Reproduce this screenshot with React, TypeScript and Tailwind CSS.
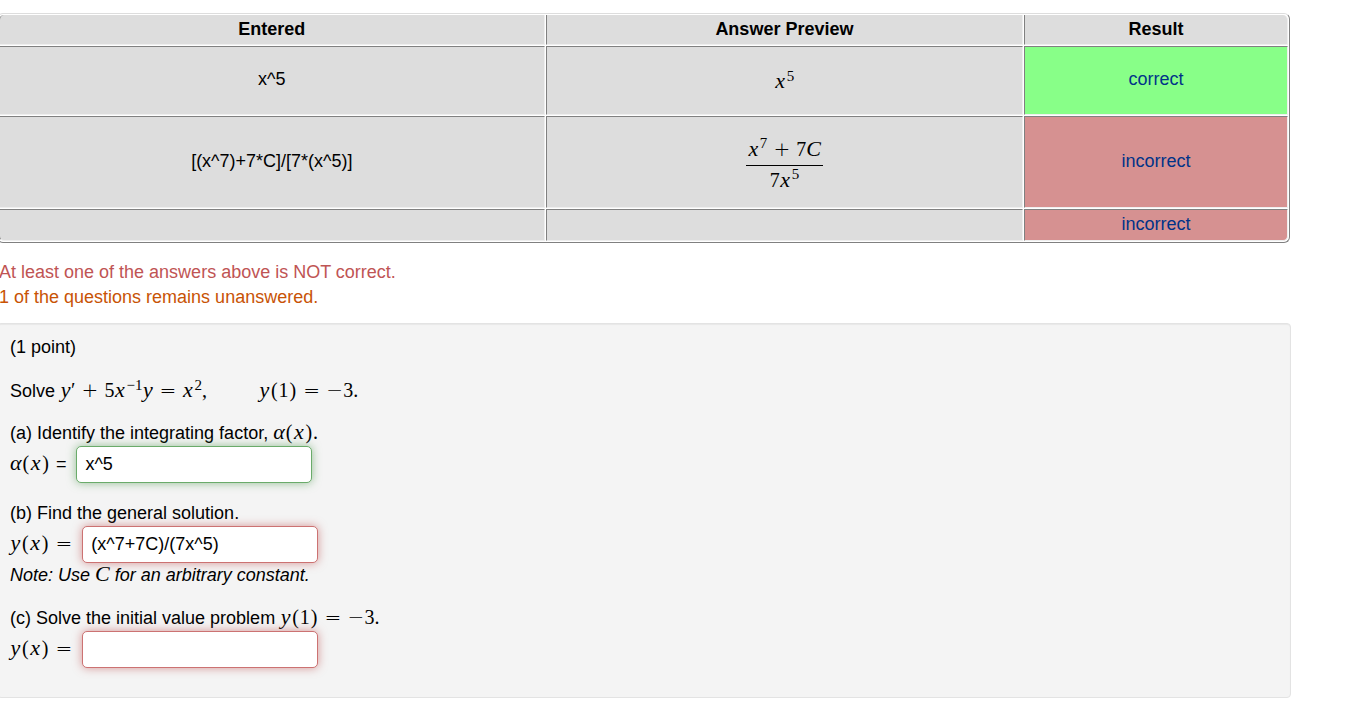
import type { ReactNode } from "react";
import clsx from "clsx";

const Math = ({ children }: { children: ReactNode }) => (
  <span className="font-['Liberation_Serif',serif] text-xl leading-none not-italic whitespace-nowrap">
    {children}
  </span>
);

const Var = ({ children }: { children: ReactNode }) => (
  <i className="inline-block min-w-[11px] text-center text-[22px] leading-none">
    {children}
  </i>
);

const Sup = ({ children }: { children: ReactNode }) => (
  <sup className="text-[15px] ml-px">{children}</sup>
);

const Sign = ({ children }: { children: ReactNode }) => (
  <span className="inline-block w-[17px] text-center font-['DejaVu_Sans',sans-serif] font-extralight text-xl leading-none">
    {children}
  </span>
);

const Op = ({ children }: { children: ReactNode }) => (
  <span className="mx-1.5">
    <Sign>{children}</Sign>
  </span>
);

const Call = ({ fn, arg }: { fn: string; arg: ReactNode }) => (
  <>
    <Var>{fn}</Var>
    <span className="mx-px">(</span>
    {arg}
    <span className="mx-px">)</span>
  </>
);

const InitialValue = () => (
  <Math>
    <Call fn="y" arg="1" />
    <Op>=</Op>
    <Sign>−</Sign>
    3.
  </Math>
);

const results = [
  {
    entered: "x^5",
    preview: (
      <Math>
        <Var>x</Var>
        <Sup>5</Sup>
      </Math>
    ),
    correct: true,
    height: "h-[69px]",
  },
  {
    entered: "[(x^7)+7*C]/[7*(x^5)]",
    preview: (
      <Math>
        <span className="inline-flex flex-col align-middle">
          <span className="border-b border-black px-0.5 pb-1 leading-6">
            <Var>x</Var>
            <Sup>7</Sup>
            <Op>+</Op>7<Var>C</Var>
          </span>
          <span className="pt-0.5 leading-6">
            7<Var>x</Var>
            <Sup>5</Sup>
          </span>
        </span>
      </Math>
    ),
    correct: false,
    height: "h-[92px]",
  },
  { entered: "", preview: null, correct: false, height: "h-8" },
];

const cell =
  "border border-t-[#808080] border-l-[#808080] border-r-[#eee] border-b-[#eee] px-0";

const ResultsTable = () => (
  <table className="w-full table-fixed border-separate border-spacing-px rounded-md border border-t-[#ddd] border-l-[#808080] border-r-[#808080] border-b-[#808080] text-center">
    <thead>
      <tr className="h-[30px]">
        <th className={clsx(cell, "w-[42.4%] rounded-tl-[5px] border-t-0 bg-[#ddd]")}>
          Entered
        </th>
        <th className={clsx(cell, "w-[37.1%] border-t-0 bg-[#ddd]")}>
          Answer Preview
        </th>
        <th className={clsx(cell, "rounded-tr-[5px] border-t-0 bg-[#ddd]")}>
          Result
        </th>
      </tr>
    </thead>
    <tbody>
      {results.map((row, idx) => (
        <tr key={idx} className={row.height}>
          <td
            className={clsx(
              cell,
              "bg-[#ddd] pb-0.5",
              idx === results.length - 1 && "rounded-bl-[5px]",
            )}
          >
            {row.entered}
          </td>
          <td className={clsx(cell, "bg-[#ddd] pt-1")}>{row.preview}</td>
          <td
            className={clsx(
              cell,
              "pb-0.5",
              row.correct ? "bg-[#88ff88]" : "bg-[#d69191]",
              idx === results.length - 1 && "rounded-br-[5px]",
            )}
          >
            <a href="#answers" className="text-[#003388]">
              {row.correct ? "correct" : "incorrect"}
            </a>
          </td>
        </tr>
      ))}
    </tbody>
  </table>
);

type AnswerProps = {
  id: string;
  label: ReactNode;
  value: string;
  correct?: boolean;
};

const Answer = ({ id, label, value, correct }: AnswerProps) => (
  <div className="flex items-center gap-1">
    <label htmlFor={id}>{label}</label>
    <input
      id={id}
      type="text"
      defaultValue={value}
      className={clsx(
        "h-[37px] w-[236px] rounded-[5px] border bg-white px-2",
        correct
          ? "border-[#6aab6a] shadow-[0_0_10px_rgba(81,153,81,0.6)]"
          : "border-[#cc7272] shadow-[0_0_10px_rgba(191,84,84,0.6)]",
      )}
    />
  </div>
);

const App = () => (
  <main
    id="answers"
    className="overflow-hidden pt-[13px] pb-6 font-['Liberation_Sans',Arial,sans-serif] text-lg leading-[25px] text-black"
  >
    <div className="-ml-[3px] mr-[71px]">
      <div className="pr-px">
        <ResultsTable />
      </div>
      <div className="mt-[17px] px-0.5">
        <p className="text-[#bf5454]">
          At least one of the answers above is NOT correct.
        </p>
        <p className="text-[#c85305]">1 of the questions remains unanswered.</p>
      </div>
      <section className="mt-[13px] rounded-sm border border-[#e3e3e3] bg-[#f4f4f4] pt-[11px] pb-[29px] pl-3 shadow-[inset_0_1px_1px_rgba(0,0,0,0.05)]">
        <p>(1 point)</p>
        <p className="mt-[19px]">
          Solve{" "}
          <Math>
            <Var>y</Var>′<Op>+</Op>5<Var>x</Var>
            <Sup>−1</Sup>
            <Var>y</Var>
            <Op>=</Op>
            <Var>x</Var>
            <Sup>2</Sup>,
          </Math>
          <span className="inline-block w-[52px]" />
          <InitialValue />
        </p>
        <div className="mt-[17px]">
          <p>
            (a) Identify the integrating factor,{" "}
            <Math>
              <Call fn="α" arg={<Var>x</Var>} />.
            </Math>
          </p>
          <Answer
            id="alpha"
            label={
              <>
                <Math>
                  <Call fn="α" arg={<Var>x</Var>} />
                </Math>
                <span className="mx-1.5">=</span>
              </>
            }
            value="x^5"
            correct
          />
        </div>
        <div className="mt-[18px]">
          <p>(b) Find the general solution.</p>
          <Answer
            id="general"
            label={
              <Math>
                <Call fn="y" arg={<Var>x</Var>} />
                <Op>=</Op>
              </Math>
            }
            value="(x^7+7C)/(7x^5)"
          />
          <p className="italic">
            Note: Use{" "}
            <Math>
              <Var>C</Var>
            </Math>{" "}
            for an arbitrary constant.
          </p>
        </div>
        <div className="mt-[18px]">
          <p>
            (c) Solve the initial value problem <InitialValue />
          </p>
          <Answer
            id="particular"
            label={
              <Math>
                <Call fn="y" arg={<Var>x</Var>} />
                <Op>=</Op>
              </Math>
            }
            value=""
          />
        </div>
      </section>
    </div>
  </main>
);

export default App;
